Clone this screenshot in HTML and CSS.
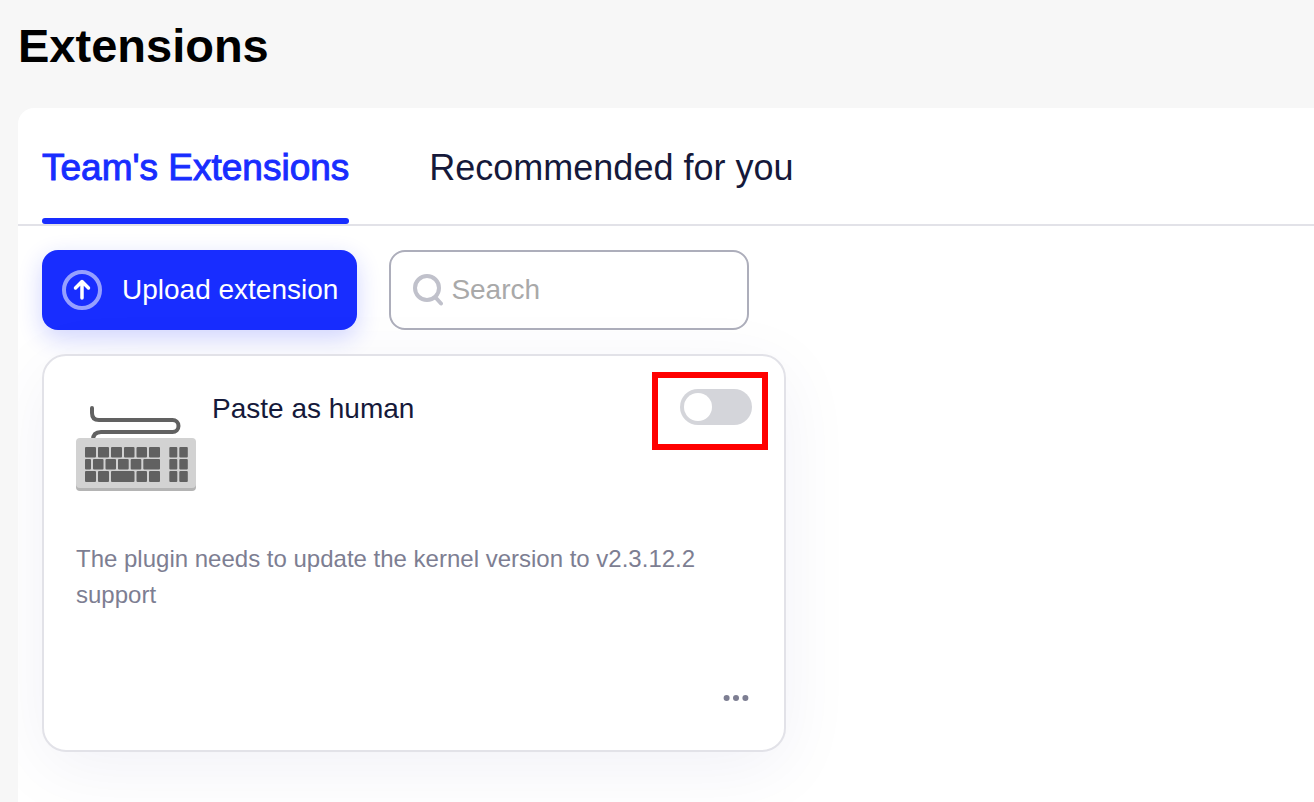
FILE: index.html
```html
<!DOCTYPE html>
<html lang="en">
<head>
    <meta charset="UTF-8">
    <title>Extensions</title>
    <link rel="stylesheet" href="styles.css">
</head>
<body>

<h1 class="title">Extensions</h1>

<main class="panel">
    <nav class="tabs">
        <a class="tab current" href="#team">Team's Extensions</a>
        <a class="tab" href="#recommended">Recommended for you</a>
    </nav>

    <div class="content">
        <div class="toolbar">
            <button class="upload" type="button">
                <svg width="40" height="40" viewBox="0 0 40 40" fill="none" stroke="#fff">
                    <circle cx="20" cy="20" r="18" stroke-width="4" stroke-opacity=".55"/>
                    <path d="M20 28V12M13.500 18L20 11.500L26.500 18" stroke-width="3.500" stroke-linecap="round" stroke-linejoin="round"/>
                </svg>
                Upload extension
            </button>
            <label class="search">
                <svg width="32" height="32" viewBox="0 0 32 32" fill="none" stroke="#c0c1cb" stroke-width="4">
                    <circle cx="16" cy="14" r="12"/>
                    <path d="M25 24L30 29.500" stroke-linecap="round"/>
                </svg>
                <input type="text" placeholder="Search" aria-label="Search">
            </label>
        </div>

        <section class="card">
            <div class="card-head">
                <!-- keyboard -->
                <svg class="logo" width="120" height="120" viewBox="0 1 120 120">
                    <path d="M16 20V25Q16 32 23 32H96.500A6 6 0 0 1 96.500 44H25Q17 44 17 52" fill="none" stroke="#616161" stroke-width="4" stroke-linecap="round"/>
                    <rect x="0" y="52" width="120" height="51" rx="4" fill="#b4b4b4"/>
                    <rect x="0" y="50" width="120" height="50" rx="4" fill="#d2d2d2"/>
                    <g fill="#616161">
                        <rect x="9" y="59" width="11" height="10.500" rx="1"/>
                        <rect x="22" y="59" width="11" height="10.500" rx="1"/>
                        <rect x="35" y="59" width="11" height="10.500" rx="1"/>
                        <rect x="48" y="59" width="10.500" height="10.500" rx="1"/>
                        <rect x="60.500" y="59" width="10.500" height="10.500" rx="1"/>
                        <rect x="73" y="59" width="11" height="10.500" rx="1"/>
                        <rect x="93.300" y="59" width="8" height="10.500" rx="1"/>
                        <rect x="103.300" y="59" width="8.500" height="10.500" rx="1"/>
                        <rect x="9" y="71" width="6" height="10.500" rx="1"/>
                        <rect x="17" y="71" width="10.500" height="10.500" rx="1"/>
                        <rect x="29.500" y="71" width="10.500" height="10.500" rx="1"/>
                        <rect x="42" y="71" width="10.700" height="10.500" rx="1"/>
                        <rect x="54.700" y="71" width="10.600" height="10.500" rx="1"/>
                        <rect x="67.300" y="71" width="16.700" height="10.500" rx="1"/>
                        <rect x="93.300" y="71" width="8" height="10.500" rx="1"/>
                        <rect x="103.300" y="71" width="8.500" height="10.500" rx="1"/>
                        <rect x="9" y="83" width="11" height="11" rx="1"/>
                        <rect x="22" y="83" width="11" height="11" rx="1"/>
                        <rect x="35" y="83" width="23.500" height="11" rx="1"/>
                        <rect x="60.500" y="83" width="10.500" height="11" rx="1"/>
                        <rect x="73" y="83" width="11" height="11" rx="1"/>
                        <rect x="93.300" y="83" width="8" height="11" rx="1"/>
                        <rect x="103.300" y="83" width="8.500" height="11" rx="1"/>
                    </g>
                </svg>
                <h2 class="name">Paste as human</h2>
                <input class="switch" type="checkbox" aria-label="Paste as human">
            </div>
            <p class="desc">The plugin needs to update the kernel version to v2.3.12.2 support</p>
            <button class="more" type="button" aria-label="More">
                <svg width="28" height="8" viewBox="0 0 28 8" fill="#7d7e92">
                    <circle cx="4.600" cy="4" r="3"/>
                    <circle cx="14" cy="4" r="3"/>
                    <circle cx="23.400" cy="4" r="3"/>
                </svg>
            </button>
            <div class="mark"></div>
        </section>
    </div>
</main>

</body>
</html>
```
FILE: styles.css
```css
*{
    margin: 0;
    padding: 0;
    box-sizing: border-box;
}

body{
    display: flex;
    flex-direction: column;
    min-height: 100vh;
    padding-left: 18px;
    background: #f7f7f7;
    color: #15193a;
    font-family: "Liberation Sans", Arial, sans-serif;
}
svg{
    display: block;
    flex: none;
}
.title{
    padding: 16px 0 32px;
    color: #000;
    font-size: 47px;
    line-height: 60px;
}
.panel{
    flex: 1;
    overflow: hidden;
    background: #fff;
    border-top-left-radius: 16px;
}

.tabs{
    display: flex;
    gap: 80px;
    padding: 0 24px;
    border-bottom: 2px solid #e2e2e8;
}
.tab{
    padding: 35px 0 25px;
    border-bottom: 6px solid transparent;
    color: inherit;
    font-size: 36px;
    line-height: 50px;
    text-decoration: none;
    white-space: nowrap;
}
.tab.current{
    position: relative;
    color: #182dff;
    font-size: 37px;
    -webkit-text-stroke: 1px #182dff;
}
.tab.current::after{
    content: "";
    position: absolute;
    left: 0;
    right: 0;
    bottom: -6px;
    height: 6px;
    border-radius: 3px;
    background: #182dff;
}

.content{
    padding: 24px;
}
.toolbar{
    display: flex;
    gap: 32px;
    margin-bottom: 24px;
}
.upload{
    display: flex;
    align-items: center;
    gap: 20px;
    height: 80px;
    padding: 0 19px 0 20px;
    border: 0;
    border-radius: 16px;
    background: #182dff;
    box-shadow: 0 8px 24px rgba(24, 45, 255, .2);
    color: #fff;
    font-family: inherit;
    font-size: 28px;
    white-space: nowrap;
    cursor: pointer;
}
.search{
    display: flex;
    align-items: center;
    gap: 8px;
    width: 360px;
    height: 80px;
    padding: 0 20px;
    border: 2px solid #adaebb;
    border-radius: 16px;
    background: #fff;
}
.search input{
    flex: 1;
    min-width: 0;
    border: 0;
    outline: 0;
    background: none;
    font-family: inherit;
    font-size: 28px;
}
.search input::placeholder{
    color: #a9a9a9;
}

.card{
    position: relative;
    display: flex;
    flex-direction: column;
    max-width: 744px;
    min-height: 398px;
    padding: 33px 32px 32px;
    border: 2px solid #e2e2e8;
    border-radius: 24px;
    background: #fff;
    box-shadow: 0 16px 72px rgba(21, 25, 120, .06);
}
.card-head{
    display: flex;
    align-items: flex-start;
    gap: 16px;
}
.name{
    flex: 1;
    font-size: 28px;
    font-weight: normal;
    line-height: 40px;
}
.switch{
    appearance: none;
    width: 72px;
    height: 36px;
    padding: 4px;
    border-radius: 18px;
    background: #d4d5da;
    cursor: pointer;
}
.switch::before{
    content: "";
    display: block;
    width: 28px;
    height: 28px;
    border-radius: 50%;
    background: #fff;
}
.switch:checked{
    background: #182dff;
}
.switch:checked::before{
    margin-left: auto;
}
.desc{
    margin-top: 32px;
    color: #7d7e92;
    font-size: 24px;
    line-height: 36px;
}
.more{
    align-self: flex-end;
    margin-top: auto;
    padding: 16px 2px 16px 0;
    border: 0;
    background: none;
    cursor: pointer;
}

/* red frame round the switch */
.mark{
    position: absolute;
    top: 16px;
    right: 16px;
    width: 116px;
    height: 78px;
    border: 6px solid #f00;
    pointer-events: none;
}
```
